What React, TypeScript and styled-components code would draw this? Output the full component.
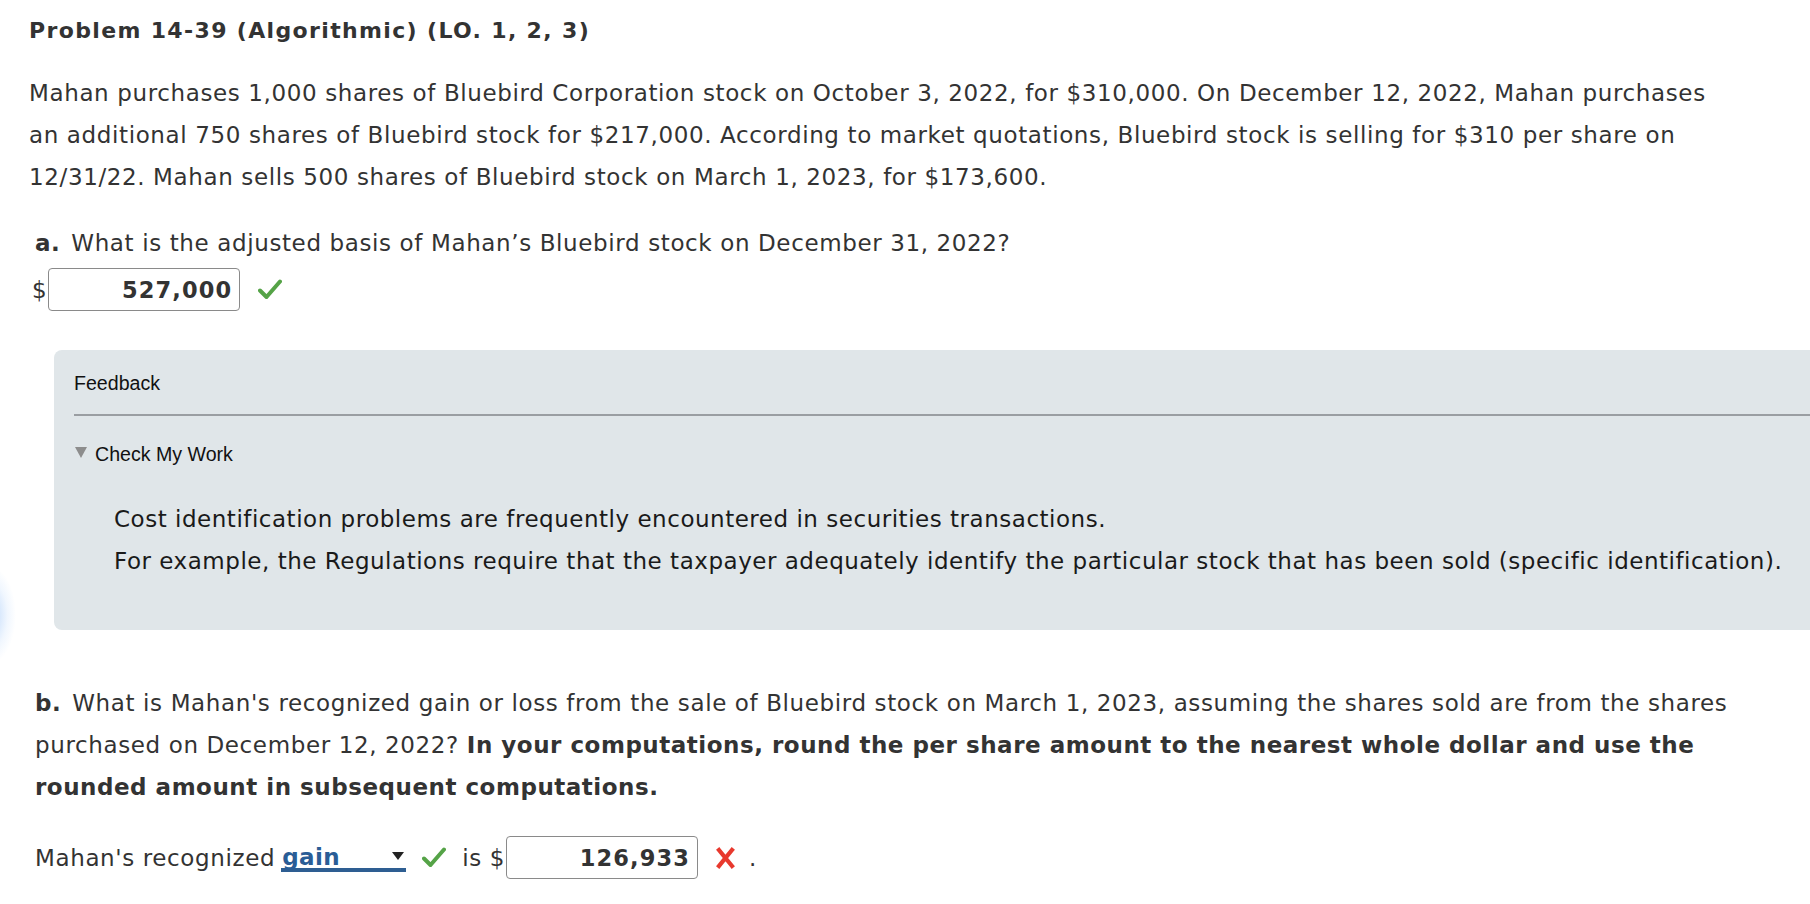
import React from "react";
import styled, { createGlobalStyle } from "styled-components";

const GlobalStyle = createGlobalStyle`
  html, body {
    margin: 0;
    padding: 0;
    background: #ffffff;
    overflow: hidden;
  }

  body {
    font-family: "DejaVu Sans", Verdana, sans-serif;
    color: #333333;
  }
`;

const Page = styled.div`
  position: relative;
  padding: 17px 0 0 29px;
  width: 1810px;
  box-sizing: border-box;
`;

const Title = styled.h1`
  margin: 0;
  font-size: 22px;
  line-height: 28px;
  font-weight: 700;
  letter-spacing: 1.35px;
  color: #333;
`;

const Text = styled.p<{ $top?: number; $indent?: number }>`
  margin: ${ props => props.$top ?? 0 }px 0 0 ${ props => props.$indent ?? 0 }px;
  font-size: 23px;
  line-height: 42px;
  letter-spacing: 0.62px;
  color: #333;
  white-space: nowrap;

  b {
    font-weight: 700;
    letter-spacing: 0.52px;
  }
`;

const Label = styled.b`
  margin-right: 11px;
`;

const AnswerRow = styled.div<{ $top: number; $indent: number }>`
  display: flex;
  align-items: center;
  margin: ${ props => props.$top }px 0 0 ${ props => props.$indent }px;
  font-size: 23px;
  letter-spacing: 0.62px;
  color: #333;
`;

const Dollar = styled.span<{ $gap?: number }>`
  margin: 0 1px 0 ${ props => props.$gap ?? 0 }px;
`;

const AmountBox = styled.div<{ $width: number }>`
  width: ${ props => props.$width }px;
  height: 43px;
  box-sizing: border-box;
  border: 1.5px solid #8a8a8a;
  border-radius: 4px;
  background: #fff;
  display: flex;
  align-items: center;
  justify-content: flex-end;
  padding-right: 7px;
  font-size: 22.5px;
  font-weight: 700;
  letter-spacing: 1.1px;
  color: #333;
`;

const Mark = styled.span<{ $gap: number }>`
  display: inline-flex;
  margin-left: ${ props => props.$gap }px;
`;

const Dropdown = styled.div`
  width: 125px;
  height: 28px;
  box-sizing: border-box;
  margin-left: 6px;
  background: #fff;
  border-radius: 5px 5px 0 0;
  border-bottom: 4px solid #2e5e92;
  display: flex;
  align-items: center;
  justify-content: space-between;
  padding: 3px 2px 0 1px;
  font-weight: 700;
  font-size: 23px;
  letter-spacing: 0.4px;
  color: #2a5d96;
  line-height: 1;
`;

const Arrow = styled.span`
  width: 0;
  height: 0;
  border-left: 6px solid transparent;
  border-right: 6px solid transparent;
  border-top: 8px solid #222;
  margin-bottom: 3px;
`;

const FeedbackBox = styled.div`
  margin: 39px -60px 0 25px;
  background: #e0e6e9;
  border-radius: 8px;
  padding: 22px 0 48px 20px;
  font-family: "Liberation Sans", Arial, sans-serif;
`;

const FeedbackTitle = styled.div`
  font-size: 19.6px;
  color: #111;
`;

const Rule = styled.div`
  margin-top: 19px;
  height: 2px;
  background: #9a9ea2;
`;

const Toggle = styled.div`
  margin-top: 27px;
  display: flex;
  align-items: center;
  font-size: 19.6px;
  color: #111;
`;

const ToggleArrow = styled.span`
  width: 0;
  height: 0;
  border-left: 6px solid transparent;
  border-right: 6px solid transparent;
  border-top: 11px solid #8d8d8d;
  margin: 0 8px 5px 1px;
`;

const FeedbackText = styled.p<{ $top?: number }>`
  margin: ${ props => props.$top ?? 0 }px 0 0 40px;
  font-family: "DejaVu Sans", Verdana, sans-serif;
  font-size: 23px;
  line-height: 42px;
  letter-spacing: 0.52px;
  color: #1a1a1a;
  white-space: nowrap;
`;

const EdgeGlow = styled.div`
  position: absolute;
  left: -40px;
  top: 565px;
  width: 56px;
  height: 100px;
  border-radius: 50%;
  background: radial-gradient(closest-side, rgba(120, 175, 245, 0.55), rgba(160, 200, 250, 0.15) 70%, rgba(255, 255, 255, 0));
  pointer-events: none;
`;

const Check = () => (
  <svg width="24" height="21" viewBox="0 0 24 21">
    <path d="M2 11.5 L8.5 18 L22 2.5" fill="none" stroke="#55a347" strokeWidth="4" strokeLinecap="round" strokeLinejoin="round" />
  </svg>
);

const Cross = () => (
  <svg width="19" height="22" viewBox="0 0 19 22">
    <path d="M3 3 L16 19 M16 3 L3 19" fill="none" stroke="#e8392e" strokeWidth="4.2" strokeLinecap="square" />
  </svg>
);

const App = () => {
  return (
    <Page>
      <GlobalStyle />
      <EdgeGlow />

      <Title>Problem 14-39 (Algorithmic) (LO. 1, 2, 3)</Title>

      <Text $top={ 27 }>
        Mahan purchases 1,000 shares of Bluebird Corporation stock on October 3, 2022, for $310,000. On December 12, 2022, Mahan purchases<br />
        an additional 750 shares of Bluebird stock for $217,000. According to market quotations, Bluebird stock is selling for $310 per share on<br />
        12/31/22. Mahan sells 500 shares of Bluebird stock on March 1, 2023, for $173,600.
      </Text>

      <Text $top={ 24 } $indent={ 6 }>
        <Label>a.</Label>What is the adjusted basis of Mahan’s Bluebird stock on December 31, 2022?
      </Text>

      <AnswerRow $top={ 4 } $indent={ 3 }>
        <Dollar>$</Dollar>
        <AmountBox $width={ 192 }>527,000</AmountBox>
        <Mark $gap={ 18 }><Check /></Mark>
      </AnswerRow>

      <FeedbackBox>
        <FeedbackTitle>Feedback</FeedbackTitle>
        <Rule />
        <Toggle><ToggleArrow />Check My Work</Toggle>
        <FeedbackText $top={ 32 }>
          Cost identification problems are frequently encountered in securities transactions.<br />
          For example, the Regulations require that the taxpayer adequately identify the particular stock that has been sold (specific identification).
        </FeedbackText>
      </FeedbackBox>

      <Text $top={ 52 } $indent={ 6 }>
        <Label>b.</Label>What is Mahan's recognized gain or loss from the sale of Bluebird stock on March 1, 2023, assuming the shares sold are from the shares<br />
        purchased on December 12, 2022? <b>In your computations, round the per share amount to the nearest whole dollar and use the</b><br />
        <b>rounded amount in subsequent computations.</b>
      </Text>

      <AnswerRow $top={ 28 } $indent={ 6 }>
        <span>Mahan's recognized</span>
        <Dropdown>gain<Arrow /></Dropdown>
        <Mark $gap={ 16 }><Check /></Mark>
        <Dollar $gap={ 16 }>is $</Dollar>
        <AmountBox $width={ 192 }>126,933</AmountBox>
        <Mark $gap={ 18 }><Cross /></Mark>
        <span style={{ marginLeft: "14px" }}>.</span>
      </AnswerRow>
    </Page>
  );
};

export default App;
